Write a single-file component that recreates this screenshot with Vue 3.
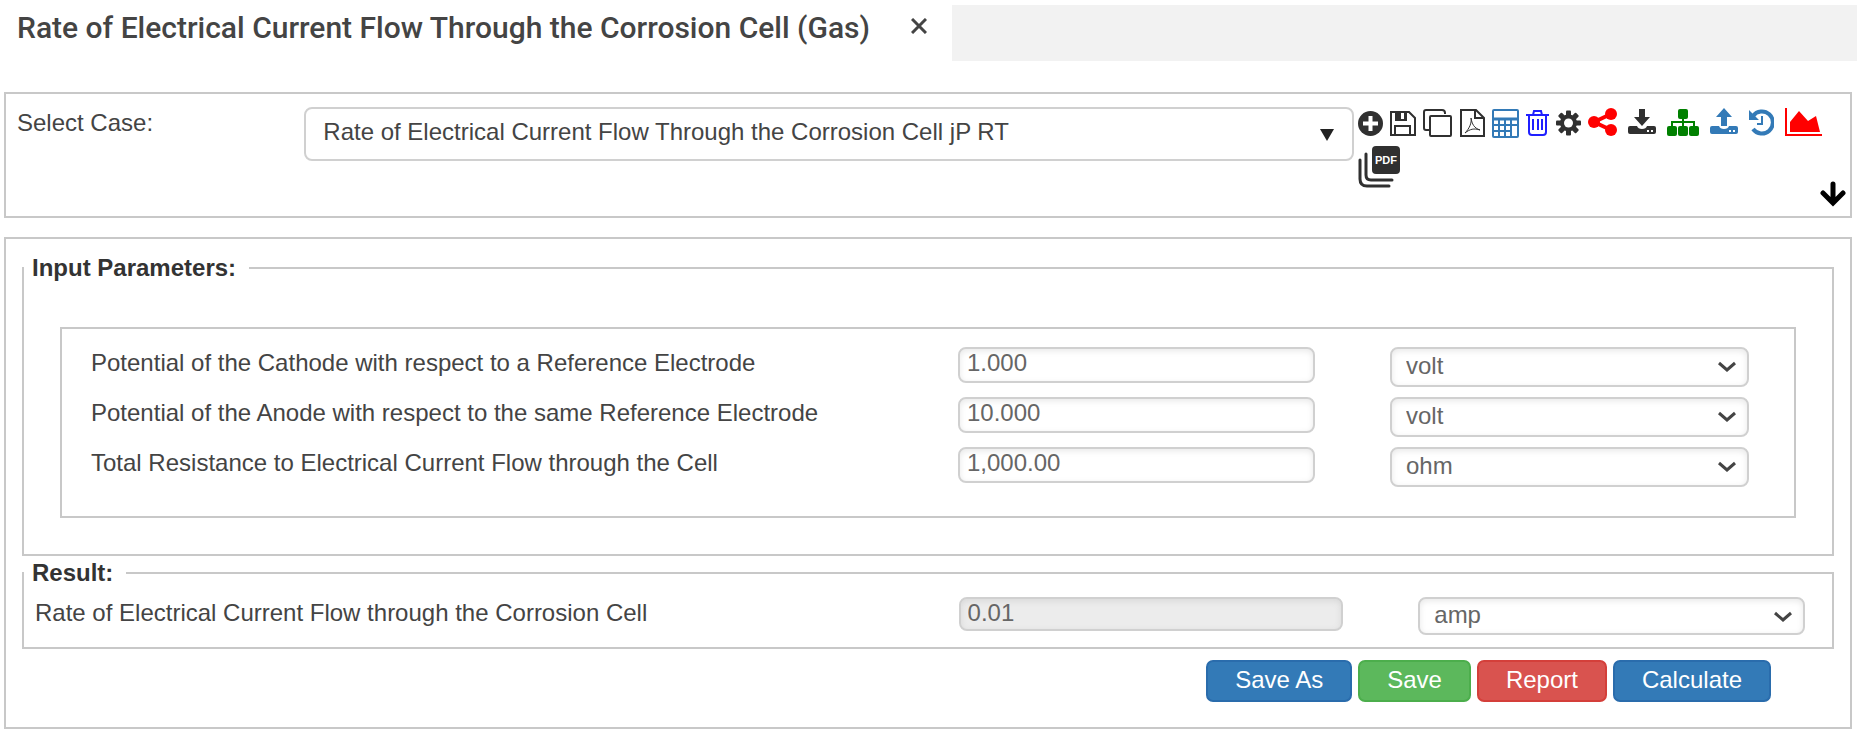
<template>
  <div class="page">
    <header class="tabs">
      <div class="tab">
        <h1>Rate of Electrical Current Flow Through the Corrosion Cell (Gas)</h1>
        <button class="close" type="button" aria-label="Close tab">
          <svg width="16" height="16" viewBox="0 0 16 16"><path d="M1 1L15 15M15 1L1 15" stroke="#444" stroke-width="3" /></svg>
        </button>
      </div>
      <div class="tab-rest"></div>
    </header>

    <section class="panel case-panel">
      <label class="case-label" for="case">Select Case:</label>
      <div class="picker case-picker">
        <select id="case" v-model="selectedCase">
          <option v-for="c in cases" :key="c">{{ c }}</option>
        </select>
        <svg class="caret" width="16" height="12" viewBox="0 0 16 12"><path d="M1 0H15L8 12Z" fill="#222" /></svg>
      </div>
      <div class="tools">
        <div class="tool-row">
          <div v-for="(group, i) in toolGroups" :key="i" class="tool-group">
            <button v-for="t in group" :key="t.name" type="button" :aria-label="t.name" :title="t.name">
              <svg :width="t.w" height="30" :viewBox="`0 0 ${t.w} 30`" :class="t.color" v-html="t.svg"></svg>
            </button>
          </div>
        </div>
        <button type="button" class="pdf-stack" aria-label="All reports">
          <svg width="44" height="44" viewBox="0 0 44 44">
            <rect x="14" y="1" width="28" height="28" rx="4" fill="#303030" />
            <path d="M8 9V30Q8 35 13 35H34M2 15V34Q2 41 9 41H31" fill="none" stroke="#303030" stroke-width="3" stroke-linecap="round" />
            <text x="28" y="19" text-anchor="middle" fill="#fff">PDF</text>
          </svg>
        </button>
        <button type="button" class="expand" aria-label="Expand">
          <svg width="26" height="26" viewBox="0 0 26 26">
            <path d="M13 3V21M3 12L13 22L23 12" fill="none" stroke="#000" stroke-width="5" stroke-linecap="round" />
          </svg>
        </button>
      </div>
    </section>

    <section class="panel form-panel">
      <fieldset class="inputs">
        <legend>Input Parameters:</legend>
        <div class="box">
          <div v-for="p in params" :key="p.id" class="row">
            <label :for="p.id">{{ p.label }}</label>
            <input :id="p.id" v-model="p.value" type="text" />
            <div class="picker">
              <select v-model="p.unit" :aria-label="p.label + ' unit'">
                <option>{{ p.unit }}</option>
              </select>
              <svg class="chevron" width="18" height="12" viewBox="0 0 18 12"><path d="M1 2L9 9L17 2" /></svg>
            </div>
          </div>
        </div>
      </fieldset>

      <fieldset class="result">
        <legend>Result:</legend>
        <div class="row">
          <label for="rate">Rate of Electrical Current Flow through the Corrosion Cell</label>
          <input id="rate" v-model="rate" type="text" readonly />
          <div class="picker">
            <select v-model="rateUnit" aria-label="Result unit">
              <option>amp</option>
            </select>
            <svg class="chevron" width="18" height="12" viewBox="0 0 18 12"><path d="M1 2L9 9L17 2" /></svg>
          </div>
        </div>
      </fieldset>

      <div class="actions">
        <button type="button" class="btn primary">Save As</button>
        <button type="button" class="btn success">Save</button>
        <button type="button" class="btn danger">Report</button>
        <button type="button" class="btn primary">Calculate</button>
      </div>
    </section>
  </div>
</template>

<script setup>
import { ref, reactive } from 'vue'

const cases = ['Rate of Electrical Current Flow Through the Corrosion Cell jP RT']
const selectedCase = ref(cases[0])

const params = reactive([
  { id: 'cathode', label: 'Potential of the Cathode with respect to a Reference Electrode', value: '1.000', unit: 'volt' },
  { id: 'anode', label: 'Potential of the Anode with respect to the same Reference Electrode', value: '10.000', unit: 'volt' },
  { id: 'resistance', label: 'Total Resistance to Electrical Current Flow through the Cell', value: '1,000.00', unit: 'ohm' }
])

const rate = ref('0.01')
const rateUnit = ref('amp')

const gearTeeth = [0, 45, 90, 135]
  .map(a => `<rect x="10" y="2.5" width="5" height="25" rx="1" transform="rotate(${a} 12.5 15)"/>`)
  .join('')

const drive = '<path fill-rule="evenodd" d="M2 18H9Q10 21 14 21Q18 21 19 18H26Q28 18 28 20V24Q28 26 26 26H2Q0 26 0 24V20Q0 18 2 18ZM19 22V24H21V22ZM23 22V24H25V22Z"/>'

const toolGroups = [
  [
    { name: 'Add', w: 25, color: 'dark', svg: '<circle cx="12.5" cy="15.5" r="12.5"/><path d="M12.5 8V23M5 15.5H20" stroke="#fff" stroke-width="4"/>' },
    { name: 'Save case', w: 26, color: 'dark', svg: '<path d="M1 4H19L25 10V27H1Z" fill="none" stroke="currentColor" stroke-width="2"/><path fill-rule="evenodd" d="M5 4H17V13H5ZM11 5V11H14V5Z"/><path d="M5 27V18H20V27" fill="none" stroke="currentColor" stroke-width="2"/>' },
    { name: 'Copy', w: 30, color: 'dark', svg: '<path d="M6 22H3Q1 22 1 20V4Q1 2 3 2H19Q22 2 22 5V6" fill="none" stroke="currentColor" stroke-width="2"/><rect x="7" y="8" width="21" height="20" rx="1" fill="none" stroke="currentColor" stroke-width="2"/>' },
    { name: 'PDF', w: 25, color: 'dark', svg: '<path d="M1 2H16L24 10V28H1ZM15 2V10H24" fill="none" stroke="currentColor" stroke-width="2"/><path d="M11 10C12 16 14 20 20 22C14 20 10 21 5 25C9 21 12 15 11 10" fill="none" stroke="currentColor" stroke-width="1"/>' },
    { name: 'Calculator', w: 27, color: 'blue', svg: '<rect x="1" y="2" width="25" height="27" rx="1" fill="none" stroke="currentColor" stroke-width="2"/><path d="M2 11H25" stroke="currentColor" stroke-width="3"/><path d="M1 17H26M1 23H19M7 11V28M13 11V28M19 11V28" stroke="currentColor" stroke-width="2"/>' },
    { name: 'Delete', w: 23, color: 'violet', svg: '<path d="M0 7H23M3 7V24Q3 27 6 27H17Q20 27 20 24V7M7 7L8 3H15L16 7" fill="none" stroke="currentColor" stroke-width="2"/><path d="M7 11V22M12 11V22M16 11V22" stroke="currentColor" stroke-width="2"/>' },
    { name: 'Settings', w: 25, color: 'dark', svg: `<circle cx="12.5" cy="15" r="8.5"/>${gearTeeth}<circle cx="12.5" cy="15" r="4.5" fill="#fff"/>` },
    { name: 'Share', w: 29, color: 'red', svg: '<path d="M6 14L23 6M6 14L23 22" stroke="currentColor" stroke-width="4"/><circle cx="6" cy="14" r="6"/><circle cx="23" cy="6" r="6"/><circle cx="23" cy="22" r="6"/>' }
  ],
  [
    { name: 'Download', w: 28, color: 'dark', svg: `<path d="M11 1H17V9H22L14 18L6 9H11Z"/>${drive}` },
    { name: 'Hierarchy', w: 32, color: 'green', svg: '<rect x="11" y="1" width="10" height="10" rx="2"/><rect x="0" y="18" width="10" height="10" rx="2"/><rect x="11" y="18" width="10" height="10" rx="2"/><rect x="22" y="18" width="10" height="10" rx="2"/><path d="M16 10V19M5 19V14H27V19" fill="none" stroke="currentColor" stroke-width="2"/>' },
    { name: 'Upload', w: 28, color: 'blue', svg: `<path d="M11 18H17V9H22L14 0L6 9H11Z"/>${drive}` },
    { name: 'History', w: 25, color: 'blue', svg: '<path d="M4 8A11 11 0 1 1 4 21" fill="none" stroke="currentColor" stroke-width="4"/><path d="M0 2V12H10ZM12 8H14V17H8V15H12Z"/>' },
    { name: 'Chart', w: 38, color: 'red', svg: '<path d="M1 0V27H37" fill="none" stroke="currentColor" stroke-width="2"/><path d="M5 24V14L14 3L23 13L31 8L35 24Z"/>' }
  ]
]
</script>

<style>
body {
  background: #fff;
}
</style>

<style scoped>
.page {
  box-sizing: border-box;
  padding: 5px 21px 24px 4px;
  color: #444;
  font: 24px/28px "Liberation Sans", Arial, sans-serif;
}
.page *,
.page *::before {
  box-sizing: border-box;
}
button {
  border: 0;
  padding: 0;
  background: none;
  font: inherit;
  cursor: pointer;
}
svg {
  display: block;
}

.tabs {
  display: flex;
  height: 56px;
  margin: 0 -5px 31px 0;
}
.tab {
  display: flex;
  padding: 7px 25px 0 13px;
  gap: 41px;
}
.tab h1 {
  margin: 0;
  font: 500 30px/32px Roboto, sans-serif;
  white-space: nowrap;
}
.close {
  height: 28px;
}
.tab-rest {
  flex: 1;
  background: #f2f2f2;
}

.panel {
  border: 2px solid #c8c8c8;
}
.case-panel {
  display: grid;
  grid-template-columns: 287fr 1049fr 495fr;
  padding: 13px 0 9px 11px;
  margin-bottom: 19px;
}
.case-label {
  padding-top: 2px;
}
.picker {
  position: relative;
}
select,
input {
  display: block;
  width: 100%;
  border: 2px solid #d0d0d0;
  border-radius: 8px;
  background: #fff;
  color: #666;
  font: inherit;
  appearance: none;
}
.case-picker select {
  height: 54px;
  padding: 0 40px 4px 17px;
  color: #444;
}
.caret {
  position: absolute;
  right: 19px;
  top: 22px;
  pointer-events: none;
}
.tools {
  display: flex;
  flex-direction: column;
  align-items: flex-start;
  padding: 1px 4px 0 4px;
}
.tool-row {
  display: flex;
  gap: 11px;
  margin-bottom: 7px;
}
.tool-group {
  display: flex;
  gap: 7px;
}
.tool-group + .tool-group {
  gap: 11px;
}
.tool-group svg {
  fill: currentColor;
}
.dark {
  color: #303030;
}
.blue {
  color: #337ab7;
}
.violet {
  color: #2020ff;
}
.red {
  color: #ff0000;
}
.green {
  color: #008000;
}
.pdf-stack text {
  font: 700 11px "Liberation Sans", Arial, sans-serif;
}
.expand {
  align-self: flex-end;
  margin-top: -8px;
}

.form-panel {
  padding: 15px 16px 25px;
}
fieldset {
  min-width: 0;
  margin: 0;
  padding: 0;
  border: 2px solid #c8c8c8;
}
legend {
  padding: 0 13px 0 8px;
  color: #333;
  font-weight: 700;
}
.inputs {
  padding: 45px 36px 36px;
}
.inputs legend {
  margin-left: -36px;
}
.box {
  border: 2px solid #c8c8c8;
  padding: 18px 45px 19px 29px;
}
.row {
  display: grid;
  grid-template-columns: 792fr 357fr 359fr;
  column-gap: 75px;
}
.row label {
  padding-top: 2px;
  white-space: nowrap;
}
.box .row {
  height: 50px;
}
.row input {
  height: 36px;
  padding: 0 7px 4px;
  box-shadow: inset 0 2px 6px #e8e8e8;
}
.row select {
  height: 40px;
  padding: 0 36px 2px 14px;
  box-shadow: inset 0 2px 6px #e8e8e8;
}
.chevron {
  position: absolute;
  right: 13px;
  top: 14px;
  fill: none;
  stroke: #444;
  stroke-width: 3;
  pointer-events: none;
}
.result {
  margin-top: 3px;
  padding: 10px 27px 12px 11px;
}
.result legend {
  margin-left: -11px;
}
.result .row {
  grid-template-columns: 847fr 384fr 386fr;
}
.result input {
  height: 34px;
  padding-bottom: 2px;
  background: #ececec;
  box-shadow: inset 0 2px 6px #d8d8d8;
}
.result select {
  height: 38px;
}

.actions {
  display: flex;
  justify-content: flex-end;
  gap: 6px;
  padding: 11px 63px 0 0;
}
.btn {
  height: 42px;
  padding: 0 27px 2px;
  border: 2px solid;
  border-radius: 7px;
  color: #fff;
}
.primary {
  background: #337ab7;
  border-color: #2a6cac;
}
.success {
  background: #5cb85c;
  border-color: #4cae4c;
}
.danger {
  background: #d9534f;
  border-color: #d43f3a;
}
</style>
